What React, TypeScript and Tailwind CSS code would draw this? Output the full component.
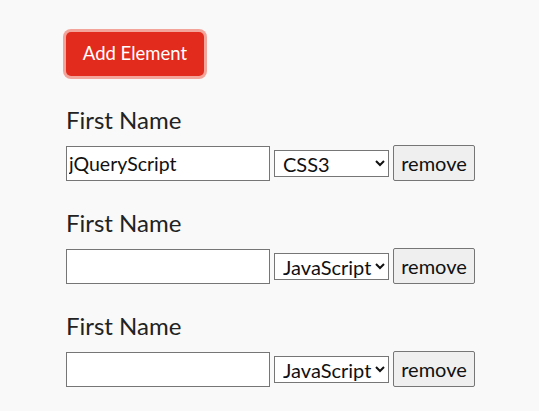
import React from 'react';

type Row = { name: string; lang: string };

const rows: Row[] = [
  { name: 'jQueryScript', lang: 'CSS3' },
  { name: '', lang: 'JavaScript' },
  { name: '', lang: 'JavaScript' },
];

const langs = ['HTML5', 'CSS3', 'JavaScript'];

function Field({ row }: { row: Row }) {
  return (
    <div className="mt-[27px]">
      <label className="block text-[24px] leading-[29px] text-[#222]">First Name</label>
      <div className="mt-[11px] flex items-center gap-[4px]">
        <input
          type="text"
          defaultValue={row.name}
          className="h-[35px] w-[204px] border border-[#767676] bg-white px-[2px] text-[19.5px] text-[#111]"
        />
        <select
          defaultValue={row.lang}
          className="h-[27px] w-[115px] border border-[#767676] bg-white pl-[4px] text-[20px] leading-none text-[#111]"
        >
          {langs.map((l) => (
            <option key={l}>{l}</option>
          ))}
        </select>
        <button className="h-[36px] w-[82px] rounded-[2px] border border-[#767676] bg-[#efefef] text-[20px] text-[#111]">
          remove
        </button>
      </div>
    </div>
  );
}

export default function App() {
  return (
    <div className="min-h-screen bg-[#f9f9f9] pl-[66px] pt-[32px] font-['Lato',sans-serif]">
      <button className="h-[44px] w-[138px] rounded-[5px] bg-[#e22b1d] text-[18.5px] text-white ring-[3px] ring-[#f3a49b]">
        Add Element
      </button>
      <div className="pt-[2px]">
        {rows.map((r, i) => (
          <Field key={i} row={r} />
        ))}
      </div>
    </div>
  );
}
